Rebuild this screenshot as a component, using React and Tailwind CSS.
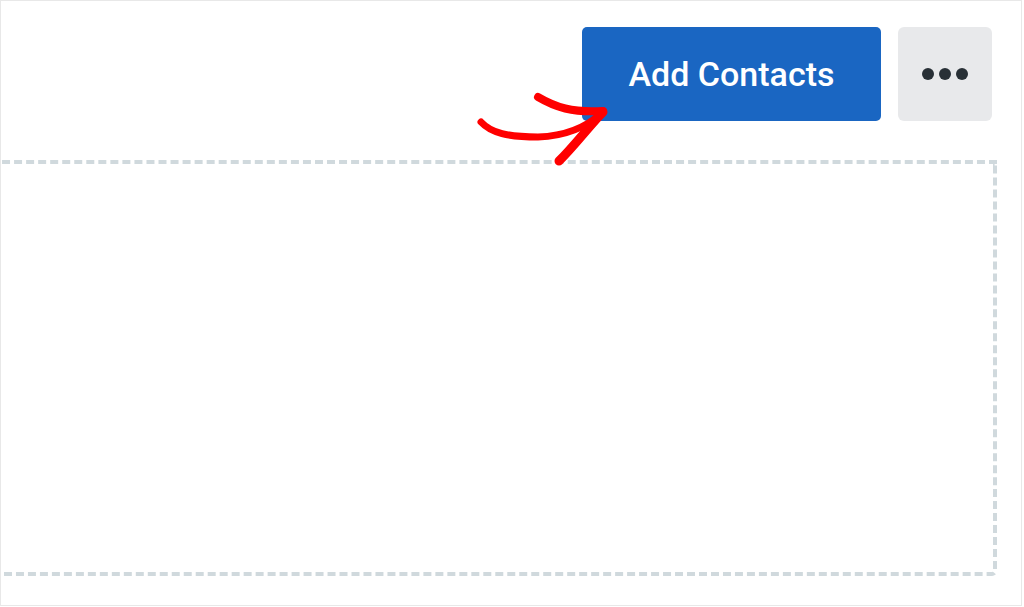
const Arrow = () => (
    <svg
        className="absolute left-0 top-0 pointer-events-none"
        width="1024"
        height="607"
        viewBox="0 0 1024 607"
        fill="none"
    >
        <g stroke="#ff0000" strokeLinecap="round" strokeLinejoin="round">
            {/* shaft */}
            <path d="M481 122 C 491 133, 508 137, 538 137 C 568 136, 588 126, 603 112" strokeWidth="7" />
            {/* upper barb */}
            <path d="M538 97 C 555 107, 572 113, 603 111" strokeWidth="8" />
            {/* lower barb */}
            <path d="M603 112 C 590 125, 576 144, 559 161" strokeWidth="9" />
        </g>
    </svg>
);

export default function App() {
    return (
        <div className="relative w-[1024px] h-[607px] bg-white overflow-hidden">
            <div className="w-[1022px] h-[606px] border border-[#e8e8e8] overflow-hidden">
                {/* Toolbar */}
                <div className="flex justify-end gap-[17px] pt-[26px] pr-[29px]">
                    <button
                        className="flex items-center justify-center w-[299px] h-[94px] rounded-[5px] bg-[#1a66c2] text-white text-[34px] font-medium"
                        style={{ fontFamily: "Roboto, 'Liberation Sans', sans-serif" }}
                    >
                        Add Contacts
                    </button>
                    <button className="flex items-center justify-center gap-[5px] w-[94px] h-[94px] rounded-[6px] bg-[#e8e9eb]">
                        <span className="w-[12px] h-[12px] rounded-full bg-[#283036]" />
                        <span className="w-[12px] h-[12px] rounded-full bg-[#283036]" />
                        <span className="w-[12px] h-[12px] rounded-full bg-[#283036]" />
                    </button>
                </div>

                {/* Drop zone */}
                <div className="mt-[39px] -ml-[11px] w-[1007px] h-[416px] border-[4px] border-dashed border-[#d0d9dd] rounded-br-[5px]" />
            </div>
            <Arrow />
        </div>
    );
}
